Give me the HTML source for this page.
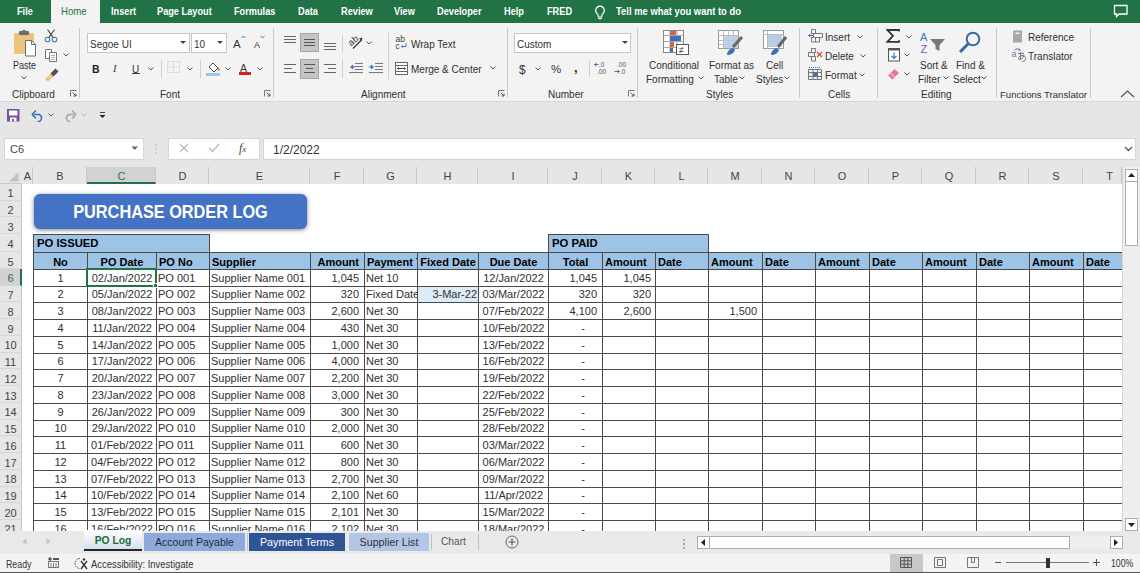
<!DOCTYPE html><html><head><meta charset="utf-8"><style>
*{margin:0;padding:0;box-sizing:border-box}
html,body{width:1140px;height:573px;overflow:hidden;background:#e6e6e6;font-family:'Liberation Sans', sans-serif;position:relative}
.a{position:absolute;white-space:nowrap}
.t{position:absolute;white-space:nowrap;line-height:1}
</style></head><body><div class="a" style="left:0;top:0;width:1140px;height:23px;background:#217346"></div>
<div class="a" style="left:51px;top:0;width:49px;height:23px;background:#f3f3f3"></div>
<div class="t" style="left:17px;top:6.5px;font-size:10px;font-weight:bold;color:#fff;transform:scaleX(0.92);transform-origin:0 0">File</div>
<div class="t" style="left:61px;top:6.5px;font-size:10.3px;color:#217346;transform:scaleX(0.93);transform-origin:0 0">Home</div>
<div class="t" style="left:111px;top:6.5px;font-size:10px;font-weight:bold;color:#fff;transform:scaleX(0.92);transform-origin:0 0">Insert</div>
<div class="t" style="left:157px;top:6.5px;font-size:10px;font-weight:bold;color:#fff;transform:scaleX(0.92);transform-origin:0 0">Page Layout</div>
<div class="t" style="left:234px;top:6.5px;font-size:10px;font-weight:bold;color:#fff;transform:scaleX(0.92);transform-origin:0 0">Formulas</div>
<div class="t" style="left:298px;top:6.5px;font-size:10px;font-weight:bold;color:#fff;transform:scaleX(0.92);transform-origin:0 0">Data</div>
<div class="t" style="left:341px;top:6.5px;font-size:10px;font-weight:bold;color:#fff;transform:scaleX(0.92);transform-origin:0 0">Review</div>
<div class="t" style="left:394px;top:6.5px;font-size:10px;font-weight:bold;color:#fff;transform:scaleX(0.92);transform-origin:0 0">View</div>
<div class="t" style="left:437px;top:6.5px;font-size:10px;font-weight:bold;color:#fff;transform:scaleX(0.92);transform-origin:0 0">Developer</div>
<div class="t" style="left:504px;top:6.5px;font-size:10px;font-weight:bold;color:#fff;transform:scaleX(0.92);transform-origin:0 0">Help</div>
<div class="t" style="left:547px;top:6.5px;font-size:10px;font-weight:bold;color:#fff;transform:scaleX(0.92);transform-origin:0 0">FRED</div>
<div class="t" style="left:616px;top:6.5px;font-size:10px;font-weight:bold;color:#fff;transform:scaleX(0.942);transform-origin:0 0">Tell me what you want to do</div>
<div class="a" style="left:0;top:23px;width:1140px;height:79px;background:#f3f3f3;border-bottom:1px solid #d6d6d6"></div>
<div class="a" style="left:4px;top:138px;width:140px;height:22px;background:#fff;border:1px solid #d4d4d4"></div>
<div class="t" style="left:10px;top:144px;font-size:11px;color:#444">C6</div>
<div class="a" style="left:168px;top:138px;width:92px;height:22px;background:#fff;border:1px solid #d4d4d4"></div>
<div class="a" style="left:263px;top:138px;width:873px;height:22px;background:#fff;border:1px solid #d4d4d4"></div>
<div class="t" style="left:273px;top:143.5px;font-size:12px;color:#333">1/2/2022</div>
<div class="a" style="left:0;top:167px;width:1123px;height:17px;background:#e6e6e6;border-bottom:1px solid #c8c8c8"></div>
<div class="a" style="left:22px;top:167px;width:11px;height:17px;background:#e6e6e6;border-right:1px solid #c8c8c8;"></div>
<div class="t" style="left:22px;top:171px;width:11px;text-align:center;font-size:11px;color:#444">A</div>
<div class="a" style="left:33px;top:167px;width:54px;height:17px;background:#e6e6e6;border-right:1px solid #c8c8c8;"></div>
<div class="t" style="left:33px;top:171px;width:54px;text-align:center;font-size:11px;color:#444">B</div>
<div class="a" style="left:87px;top:167px;width:69px;height:17px;background:#d2d2d2;border-right:1px solid #c8c8c8;border-bottom:2px solid #217346;"></div>
<div class="t" style="left:87px;top:171px;width:69px;text-align:center;font-size:11px;color:#217346">C</div>
<div class="a" style="left:156px;top:167px;width:53px;height:17px;background:#e6e6e6;border-right:1px solid #c8c8c8;"></div>
<div class="t" style="left:156px;top:171px;width:53px;text-align:center;font-size:11px;color:#444">D</div>
<div class="a" style="left:209px;top:167px;width:101px;height:17px;background:#e6e6e6;border-right:1px solid #c8c8c8;"></div>
<div class="t" style="left:209px;top:171px;width:101px;text-align:center;font-size:11px;color:#444">E</div>
<div class="a" style="left:310px;top:167px;width:54px;height:17px;background:#e6e6e6;border-right:1px solid #c8c8c8;"></div>
<div class="t" style="left:310px;top:171px;width:54px;text-align:center;font-size:11px;color:#444">F</div>
<div class="a" style="left:364px;top:167px;width:53px;height:17px;background:#e6e6e6;border-right:1px solid #c8c8c8;"></div>
<div class="t" style="left:364px;top:171px;width:53px;text-align:center;font-size:11px;color:#444">G</div>
<div class="a" style="left:417px;top:167px;width:61px;height:17px;background:#e6e6e6;border-right:1px solid #c8c8c8;"></div>
<div class="t" style="left:417px;top:171px;width:61px;text-align:center;font-size:11px;color:#444">H</div>
<div class="a" style="left:478px;top:167px;width:70px;height:17px;background:#e6e6e6;border-right:1px solid #c8c8c8;"></div>
<div class="t" style="left:478px;top:171px;width:70px;text-align:center;font-size:11px;color:#444">I</div>
<div class="a" style="left:548px;top:167px;width:54px;height:17px;background:#e6e6e6;border-right:1px solid #c8c8c8;"></div>
<div class="t" style="left:548px;top:171px;width:54px;text-align:center;font-size:11px;color:#444">J</div>
<div class="a" style="left:602px;top:167px;width:53px;height:17px;background:#e6e6e6;border-right:1px solid #c8c8c8;"></div>
<div class="t" style="left:602px;top:171px;width:53px;text-align:center;font-size:11px;color:#444">K</div>
<div class="a" style="left:655px;top:167px;width:53px;height:17px;background:#e6e6e6;border-right:1px solid #c8c8c8;"></div>
<div class="t" style="left:655px;top:171px;width:53px;text-align:center;font-size:11px;color:#444">L</div>
<div class="a" style="left:708px;top:167px;width:54px;height:17px;background:#e6e6e6;border-right:1px solid #c8c8c8;"></div>
<div class="t" style="left:708px;top:171px;width:54px;text-align:center;font-size:11px;color:#444">M</div>
<div class="a" style="left:762px;top:167px;width:53px;height:17px;background:#e6e6e6;border-right:1px solid #c8c8c8;"></div>
<div class="t" style="left:762px;top:171px;width:53px;text-align:center;font-size:11px;color:#444">N</div>
<div class="a" style="left:815px;top:167px;width:54px;height:17px;background:#e6e6e6;border-right:1px solid #c8c8c8;"></div>
<div class="t" style="left:815px;top:171px;width:54px;text-align:center;font-size:11px;color:#444">O</div>
<div class="a" style="left:869px;top:167px;width:53px;height:17px;background:#e6e6e6;border-right:1px solid #c8c8c8;"></div>
<div class="t" style="left:869px;top:171px;width:53px;text-align:center;font-size:11px;color:#444">P</div>
<div class="a" style="left:922px;top:167px;width:54px;height:17px;background:#e6e6e6;border-right:1px solid #c8c8c8;"></div>
<div class="t" style="left:922px;top:171px;width:54px;text-align:center;font-size:11px;color:#444">Q</div>
<div class="a" style="left:976px;top:167px;width:53px;height:17px;background:#e6e6e6;border-right:1px solid #c8c8c8;"></div>
<div class="t" style="left:976px;top:171px;width:53px;text-align:center;font-size:11px;color:#444">R</div>
<div class="a" style="left:1029px;top:167px;width:54px;height:17px;background:#e6e6e6;border-right:1px solid #c8c8c8;"></div>
<div class="t" style="left:1029px;top:171px;width:54px;text-align:center;font-size:11px;color:#444">S</div>
<div class="a" style="left:1083px;top:167px;width:39px;height:17px;background:#e6e6e6;border-right:1px solid #c8c8c8;"></div>
<div class="t" style="left:1083px;top:171px;width:53px;text-align:center;font-size:11px;color:#444">T</div>
<div class="a" style="left:22px;top:184px;width:1100px;height:347px;background:#fff"></div>
<div class="a" style="left:0;top:184px;width:22px;height:17px;background:#e6e6e6;border-bottom:1px solid #d6d6d6;border-right:1px solid #c8c8c8"></div>
<div class="t" style="left:0;top:188px;width:21px;text-align:center;font-size:11px;color:#444">1</div>
<div class="a" style="left:0;top:201px;width:22px;height:16px;background:#e6e6e6;border-bottom:1px solid #d6d6d6;border-right:1px solid #c8c8c8"></div>
<div class="t" style="left:0;top:205px;width:21px;text-align:center;font-size:11px;color:#444">2</div>
<div class="a" style="left:0;top:217px;width:22px;height:17px;background:#e6e6e6;border-bottom:1px solid #d6d6d6;border-right:1px solid #c8c8c8"></div>
<div class="t" style="left:0;top:222px;width:21px;text-align:center;font-size:11px;color:#444">3</div>
<div class="a" style="left:0;top:234px;width:22px;height:18px;background:#e6e6e6;border-bottom:1px solid #d6d6d6;border-right:1px solid #c8c8c8"></div>
<div class="t" style="left:0;top:239px;width:21px;text-align:center;font-size:11px;color:#444">4</div>
<div class="a" style="left:0;top:252px;width:22px;height:17px;background:#e6e6e6;border-bottom:1px solid #d6d6d6;border-right:1px solid #c8c8c8"></div>
<div class="t" style="left:0;top:257px;width:21px;text-align:center;font-size:11px;color:#444">5</div>
<div class="a" style="left:0;top:269px;width:22px;height:17px;background:#d2d2d2;border-bottom:1px solid #d6d6d6;border-right:2px solid #217346"></div>
<div class="t" style="left:0;top:273px;width:21px;text-align:center;font-size:11px;color:#217346">6</div>
<div class="a" style="left:0;top:286px;width:22px;height:16px;background:#e6e6e6;border-bottom:1px solid #d6d6d6;border-right:1px solid #c8c8c8"></div>
<div class="t" style="left:0;top:290px;width:21px;text-align:center;font-size:11px;color:#444">7</div>
<div class="a" style="left:0;top:302px;width:22px;height:17px;background:#e6e6e6;border-bottom:1px solid #d6d6d6;border-right:1px solid #c8c8c8"></div>
<div class="t" style="left:0;top:307px;width:21px;text-align:center;font-size:11px;color:#444">8</div>
<div class="a" style="left:0;top:319px;width:22px;height:17px;background:#e6e6e6;border-bottom:1px solid #d6d6d6;border-right:1px solid #c8c8c8"></div>
<div class="t" style="left:0;top:324px;width:21px;text-align:center;font-size:11px;color:#444">9</div>
<div class="a" style="left:0;top:336px;width:22px;height:17px;background:#e6e6e6;border-bottom:1px solid #d6d6d6;border-right:1px solid #c8c8c8"></div>
<div class="t" style="left:0;top:340px;width:21px;text-align:center;font-size:11px;color:#444">10</div>
<div class="a" style="left:0;top:353px;width:22px;height:16px;background:#e6e6e6;border-bottom:1px solid #d6d6d6;border-right:1px solid #c8c8c8"></div>
<div class="t" style="left:0;top:357px;width:21px;text-align:center;font-size:11px;color:#444">11</div>
<div class="a" style="left:0;top:369px;width:22px;height:17px;background:#e6e6e6;border-bottom:1px solid #d6d6d6;border-right:1px solid #c8c8c8"></div>
<div class="t" style="left:0;top:374px;width:21px;text-align:center;font-size:11px;color:#444">12</div>
<div class="a" style="left:0;top:386px;width:22px;height:17px;background:#e6e6e6;border-bottom:1px solid #d6d6d6;border-right:1px solid #c8c8c8"></div>
<div class="t" style="left:0;top:391px;width:21px;text-align:center;font-size:11px;color:#444">13</div>
<div class="a" style="left:0;top:403px;width:22px;height:17px;background:#e6e6e6;border-bottom:1px solid #d6d6d6;border-right:1px solid #c8c8c8"></div>
<div class="t" style="left:0;top:407px;width:21px;text-align:center;font-size:11px;color:#444">14</div>
<div class="a" style="left:0;top:420px;width:22px;height:16px;background:#e6e6e6;border-bottom:1px solid #d6d6d6;border-right:1px solid #c8c8c8"></div>
<div class="t" style="left:0;top:424px;width:21px;text-align:center;font-size:11px;color:#444">15</div>
<div class="a" style="left:0;top:436px;width:22px;height:17px;background:#e6e6e6;border-bottom:1px solid #d6d6d6;border-right:1px solid #c8c8c8"></div>
<div class="t" style="left:0;top:441px;width:21px;text-align:center;font-size:11px;color:#444">16</div>
<div class="a" style="left:0;top:453px;width:22px;height:17px;background:#e6e6e6;border-bottom:1px solid #d6d6d6;border-right:1px solid #c8c8c8"></div>
<div class="t" style="left:0;top:458px;width:21px;text-align:center;font-size:11px;color:#444">17</div>
<div class="a" style="left:0;top:470px;width:22px;height:17px;background:#e6e6e6;border-bottom:1px solid #d6d6d6;border-right:1px solid #c8c8c8"></div>
<div class="t" style="left:0;top:474px;width:21px;text-align:center;font-size:11px;color:#444">18</div>
<div class="a" style="left:0;top:487px;width:22px;height:16px;background:#e6e6e6;border-bottom:1px solid #d6d6d6;border-right:1px solid #c8c8c8"></div>
<div class="t" style="left:0;top:491px;width:21px;text-align:center;font-size:11px;color:#444">19</div>
<div class="a" style="left:0;top:503px;width:22px;height:17px;background:#e6e6e6;border-bottom:1px solid #d6d6d6;border-right:1px solid #c8c8c8"></div>
<div class="t" style="left:0;top:508px;width:21px;text-align:center;font-size:11px;color:#444">20</div>
<div class="a" style="left:0;top:520px;width:22px;height:17px;background:#e6e6e6;border-bottom:1px solid #d6d6d6;border-right:1px solid #c8c8c8"></div>
<div class="t" style="left:0;top:524px;width:21px;text-align:center;font-size:11px;color:#444">21</div>
<div class="a" style="left:33px;top:234px;width:176px;height:18px;background:#9dc3e6"></div>
<div class="a" style="left:548px;top:234px;width:160px;height:18px;background:#9dc3e6"></div>
<div class="a" style="left:33px;top:252px;width:1089px;height:17px;background:#9dc3e6"></div>
<div class="a" style="left:417px;top:286px;width:61px;height:16px;background:#ddebf7"></div>
<div class="a" style="left:33px;top:234px;width:177px;height:1px;background:#4a4a4a"></div>
<div class="a" style="left:548px;top:234px;width:161px;height:1px;background:#4a4a4a"></div>
<div class="a" style="left:33px;top:252px;width:1090px;height:1px;background:#4a4a4a"></div>
<div class="a" style="left:33px;top:269px;width:1090px;height:1px;background:#4a4a4a"></div>
<div class="a" style="left:33px;top:286px;width:1090px;height:1px;background:#4a4a4a"></div>
<div class="a" style="left:33px;top:302px;width:1090px;height:1px;background:#4a4a4a"></div>
<div class="a" style="left:33px;top:319px;width:1090px;height:1px;background:#4a4a4a"></div>
<div class="a" style="left:33px;top:336px;width:1090px;height:1px;background:#4a4a4a"></div>
<div class="a" style="left:33px;top:353px;width:1090px;height:1px;background:#4a4a4a"></div>
<div class="a" style="left:33px;top:369px;width:1090px;height:1px;background:#4a4a4a"></div>
<div class="a" style="left:33px;top:386px;width:1090px;height:1px;background:#4a4a4a"></div>
<div class="a" style="left:33px;top:403px;width:1090px;height:1px;background:#4a4a4a"></div>
<div class="a" style="left:33px;top:420px;width:1090px;height:1px;background:#4a4a4a"></div>
<div class="a" style="left:33px;top:436px;width:1090px;height:1px;background:#4a4a4a"></div>
<div class="a" style="left:33px;top:453px;width:1090px;height:1px;background:#4a4a4a"></div>
<div class="a" style="left:33px;top:470px;width:1090px;height:1px;background:#4a4a4a"></div>
<div class="a" style="left:33px;top:487px;width:1090px;height:1px;background:#4a4a4a"></div>
<div class="a" style="left:33px;top:503px;width:1090px;height:1px;background:#4a4a4a"></div>
<div class="a" style="left:33px;top:520px;width:1090px;height:1px;background:#4a4a4a"></div>
<div class="a" style="left:33px;top:252px;width:1px;height:280px;background:#4a4a4a"></div>
<div class="a" style="left:87px;top:252px;width:1px;height:280px;background:#4a4a4a"></div>
<div class="a" style="left:156px;top:252px;width:1px;height:280px;background:#4a4a4a"></div>
<div class="a" style="left:209px;top:252px;width:1px;height:280px;background:#4a4a4a"></div>
<div class="a" style="left:310px;top:252px;width:1px;height:280px;background:#4a4a4a"></div>
<div class="a" style="left:364px;top:252px;width:1px;height:280px;background:#4a4a4a"></div>
<div class="a" style="left:417px;top:252px;width:1px;height:280px;background:#4a4a4a"></div>
<div class="a" style="left:478px;top:252px;width:1px;height:280px;background:#4a4a4a"></div>
<div class="a" style="left:548px;top:252px;width:1px;height:280px;background:#4a4a4a"></div>
<div class="a" style="left:602px;top:252px;width:1px;height:280px;background:#4a4a4a"></div>
<div class="a" style="left:655px;top:252px;width:1px;height:280px;background:#4a4a4a"></div>
<div class="a" style="left:708px;top:252px;width:1px;height:280px;background:#4a4a4a"></div>
<div class="a" style="left:762px;top:252px;width:1px;height:280px;background:#4a4a4a"></div>
<div class="a" style="left:815px;top:252px;width:1px;height:280px;background:#4a4a4a"></div>
<div class="a" style="left:869px;top:252px;width:1px;height:280px;background:#4a4a4a"></div>
<div class="a" style="left:922px;top:252px;width:1px;height:280px;background:#4a4a4a"></div>
<div class="a" style="left:976px;top:252px;width:1px;height:280px;background:#4a4a4a"></div>
<div class="a" style="left:1029px;top:252px;width:1px;height:280px;background:#4a4a4a"></div>
<div class="a" style="left:1083px;top:252px;width:1px;height:280px;background:#4a4a4a"></div>
<div class="a" style="left:33px;top:234px;width:1px;height:298px;background:#4a4a4a"></div>
<div class="a" style="left:209px;top:234px;width:1px;height:19px;background:#4a4a4a"></div>
<div class="a" style="left:548px;top:234px;width:1px;height:19px;background:#4a4a4a"></div>
<div class="a" style="left:708px;top:234px;width:1px;height:19px;background:#4a4a4a"></div>
<div class="t" style="left:37px;top:237.6px;font-size:11.3px;font-weight:bold;color:#000">PO ISSUED</div>
<div class="t" style="left:552px;top:237.6px;font-size:11.3px;font-weight:bold;color:#000">PO PAID</div>
<div class="t" style="left:34px;top:256.5px;width:53px;font-size:11px;color:#000;font-weight:bold;text-align:center;">No</div>
<div class="t" style="left:88px;top:256.5px;width:68px;font-size:11px;color:#000;font-weight:bold;text-align:center;">PO Date</div>
<div class="t" style="left:157px;top:256.5px;width:52px;font-size:11px;color:#000;font-weight:bold;text-align:left;padding-left:2px;">PO No</div>
<div class="t" style="left:210px;top:256.5px;width:100px;font-size:11px;color:#000;font-weight:bold;text-align:left;padding-left:2px;">Supplier</div>
<div class="t" style="left:311px;top:256.5px;width:53px;font-size:11px;color:#000;font-weight:bold;text-align:right;padding-right:5px;">Amount</div>
<div class="t" style="left:365px;top:256.5px;width:52px;font-size:11px;color:#000;font-weight:bold;text-align:left;padding-left:2px;overflow:hidden;">Payment Terms</div>
<div class="t" style="left:418px;top:256.5px;width:60px;font-size:11px;color:#000;font-weight:bold;text-align:center;">Fixed Date</div>
<div class="t" style="left:479px;top:256.5px;width:69px;font-size:11px;color:#000;font-weight:bold;text-align:center;">Due Date</div>
<div class="t" style="left:549px;top:256.5px;width:53px;font-size:11px;color:#000;font-weight:bold;text-align:center;">Total</div>
<div class="t" style="left:603px;top:256.5px;width:52px;font-size:11px;color:#000;font-weight:bold;text-align:left;padding-left:2px;">Amount</div>
<div class="t" style="left:656px;top:256.5px;width:52px;font-size:11px;color:#000;font-weight:bold;text-align:left;padding-left:2px;">Date</div>
<div class="t" style="left:709px;top:256.5px;width:53px;font-size:11px;color:#000;font-weight:bold;text-align:left;padding-left:2px;">Amount</div>
<div class="t" style="left:763px;top:256.5px;width:52px;font-size:11px;color:#000;font-weight:bold;text-align:left;padding-left:2px;">Date</div>
<div class="t" style="left:816px;top:256.5px;width:53px;font-size:11px;color:#000;font-weight:bold;text-align:left;padding-left:2px;">Amount</div>
<div class="t" style="left:870px;top:256.5px;width:52px;font-size:11px;color:#000;font-weight:bold;text-align:left;padding-left:2px;">Date</div>
<div class="t" style="left:923px;top:256.5px;width:53px;font-size:11px;color:#000;font-weight:bold;text-align:left;padding-left:2px;">Amount</div>
<div class="t" style="left:977px;top:256.5px;width:52px;font-size:11px;color:#000;font-weight:bold;text-align:left;padding-left:2px;">Date</div>
<div class="t" style="left:1030px;top:256.5px;width:53px;font-size:11px;color:#000;font-weight:bold;text-align:left;padding-left:2px;">Amount</div>
<div class="t" style="left:1084px;top:256.5px;width:38px;font-size:11px;color:#000;font-weight:bold;text-align:left;padding-left:2px;">Date</div>
<div class="t" style="left:34px;top:272.6px;width:53px;font-size:11px;color:#303030;text-align:center;">1</div>
<div class="t" style="left:88px;top:272.6px;width:68px;font-size:11px;color:#303030;text-align:center;">02/Jan/2022</div>
<div class="t" style="left:157px;top:272.6px;width:52px;font-size:11px;color:#303030;text-align:left;padding-left:1px;">PO 001</div>
<div class="t" style="left:210px;top:272.6px;width:100px;font-size:11px;color:#303030;text-align:left;padding-left:1px;">Supplier Name 001</div>
<div class="t" style="left:311px;top:272.6px;width:53px;font-size:11px;color:#303030;text-align:right;padding-right:5px;">1,045</div>
<div class="t" style="left:365px;top:272.6px;width:52px;font-size:11px;color:#303030;text-align:left;padding-left:1px;overflow:hidden;">Net 10</div>
<div class="t" style="left:479px;top:272.6px;width:69px;font-size:11px;color:#303030;text-align:center;">12/Jan/2022</div>
<div class="t" style="left:549px;top:272.6px;width:53px;font-size:11px;color:#303030;text-align:right;padding-right:5px;">1,045</div>
<div class="t" style="left:603px;top:272.6px;width:52px;font-size:11px;color:#303030;text-align:right;padding-right:4px;">1,045</div>
<div class="t" style="left:34px;top:289.3px;width:53px;font-size:11px;color:#303030;text-align:center;">2</div>
<div class="t" style="left:88px;top:289.3px;width:68px;font-size:11px;color:#303030;text-align:center;">05/Jan/2022</div>
<div class="t" style="left:157px;top:289.3px;width:52px;font-size:11px;color:#303030;text-align:left;padding-left:1px;">PO 002</div>
<div class="t" style="left:210px;top:289.3px;width:100px;font-size:11px;color:#303030;text-align:left;padding-left:1px;">Supplier Name 002</div>
<div class="t" style="left:311px;top:289.3px;width:53px;font-size:11px;color:#303030;text-align:right;padding-right:5px;">320</div>
<div class="t" style="left:365px;top:289.3px;width:52px;font-size:11px;color:#303030;text-align:left;padding-left:1px;overflow:hidden;">Fixed Date</div>
<div class="t" style="left:418px;top:289.3px;width:60px;font-size:11px;color:#303030;text-align:right;padding-right:1px;">3-Mar-22</div>
<div class="t" style="left:479px;top:289.3px;width:69px;font-size:11px;color:#303030;text-align:center;">03/Mar/2022</div>
<div class="t" style="left:549px;top:289.3px;width:53px;font-size:11px;color:#303030;text-align:right;padding-right:5px;">320</div>
<div class="t" style="left:603px;top:289.3px;width:52px;font-size:11px;color:#303030;text-align:right;padding-right:4px;">320</div>
<div class="t" style="left:34px;top:306.1px;width:53px;font-size:11px;color:#303030;text-align:center;">3</div>
<div class="t" style="left:88px;top:306.1px;width:68px;font-size:11px;color:#303030;text-align:center;">08/Jan/2022</div>
<div class="t" style="left:157px;top:306.1px;width:52px;font-size:11px;color:#303030;text-align:left;padding-left:1px;">PO 003</div>
<div class="t" style="left:210px;top:306.1px;width:100px;font-size:11px;color:#303030;text-align:left;padding-left:1px;">Supplier Name 003</div>
<div class="t" style="left:311px;top:306.1px;width:53px;font-size:11px;color:#303030;text-align:right;padding-right:5px;">2,600</div>
<div class="t" style="left:365px;top:306.1px;width:52px;font-size:11px;color:#303030;text-align:left;padding-left:1px;overflow:hidden;">Net 30</div>
<div class="t" style="left:479px;top:306.1px;width:69px;font-size:11px;color:#303030;text-align:center;">07/Feb/2022</div>
<div class="t" style="left:549px;top:306.1px;width:53px;font-size:11px;color:#303030;text-align:right;padding-right:5px;">4,100</div>
<div class="t" style="left:603px;top:306.1px;width:52px;font-size:11px;color:#303030;text-align:right;padding-right:4px;">2,600</div>
<div class="t" style="left:709px;top:306.1px;width:53px;font-size:11px;color:#303030;text-align:right;padding-right:5px;">1,500</div>
<div class="t" style="left:34px;top:322.8px;width:53px;font-size:11px;color:#303030;text-align:center;">4</div>
<div class="t" style="left:88px;top:322.8px;width:68px;font-size:11px;color:#303030;text-align:center;">11/Jan/2022</div>
<div class="t" style="left:157px;top:322.8px;width:52px;font-size:11px;color:#303030;text-align:left;padding-left:1px;">PO 004</div>
<div class="t" style="left:210px;top:322.8px;width:100px;font-size:11px;color:#303030;text-align:left;padding-left:1px;">Supplier Name 004</div>
<div class="t" style="left:311px;top:322.8px;width:53px;font-size:11px;color:#303030;text-align:right;padding-right:5px;">430</div>
<div class="t" style="left:365px;top:322.8px;width:52px;font-size:11px;color:#303030;text-align:left;padding-left:1px;overflow:hidden;">Net 30</div>
<div class="t" style="left:479px;top:322.8px;width:69px;font-size:11px;color:#303030;text-align:center;">10/Feb/2022</div>
<div class="t" style="left:549px;top:322.8px;width:53px;font-size:11px;color:#303030;text-align:right;padding-right:17px;">-</div>
<div class="t" style="left:34px;top:339.6px;width:53px;font-size:11px;color:#303030;text-align:center;">5</div>
<div class="t" style="left:88px;top:339.6px;width:68px;font-size:11px;color:#303030;text-align:center;">14/Jan/2022</div>
<div class="t" style="left:157px;top:339.6px;width:52px;font-size:11px;color:#303030;text-align:left;padding-left:1px;">PO 005</div>
<div class="t" style="left:210px;top:339.6px;width:100px;font-size:11px;color:#303030;text-align:left;padding-left:1px;">Supplier Name 005</div>
<div class="t" style="left:311px;top:339.6px;width:53px;font-size:11px;color:#303030;text-align:right;padding-right:5px;">1,000</div>
<div class="t" style="left:365px;top:339.6px;width:52px;font-size:11px;color:#303030;text-align:left;padding-left:1px;overflow:hidden;">Net 30</div>
<div class="t" style="left:479px;top:339.6px;width:69px;font-size:11px;color:#303030;text-align:center;">13/Feb/2022</div>
<div class="t" style="left:549px;top:339.6px;width:53px;font-size:11px;color:#303030;text-align:right;padding-right:17px;">-</div>
<div class="t" style="left:34px;top:356.3px;width:53px;font-size:11px;color:#303030;text-align:center;">6</div>
<div class="t" style="left:88px;top:356.3px;width:68px;font-size:11px;color:#303030;text-align:center;">17/Jan/2022</div>
<div class="t" style="left:157px;top:356.3px;width:52px;font-size:11px;color:#303030;text-align:left;padding-left:1px;">PO 006</div>
<div class="t" style="left:210px;top:356.3px;width:100px;font-size:11px;color:#303030;text-align:left;padding-left:1px;">Supplier Name 006</div>
<div class="t" style="left:311px;top:356.3px;width:53px;font-size:11px;color:#303030;text-align:right;padding-right:5px;">4,000</div>
<div class="t" style="left:365px;top:356.3px;width:52px;font-size:11px;color:#303030;text-align:left;padding-left:1px;overflow:hidden;">Net 30</div>
<div class="t" style="left:479px;top:356.3px;width:69px;font-size:11px;color:#303030;text-align:center;">16/Feb/2022</div>
<div class="t" style="left:549px;top:356.3px;width:53px;font-size:11px;color:#303030;text-align:right;padding-right:17px;">-</div>
<div class="t" style="left:34px;top:373.0px;width:53px;font-size:11px;color:#303030;text-align:center;">7</div>
<div class="t" style="left:88px;top:373.0px;width:68px;font-size:11px;color:#303030;text-align:center;">20/Jan/2022</div>
<div class="t" style="left:157px;top:373.0px;width:52px;font-size:11px;color:#303030;text-align:left;padding-left:1px;">PO 007</div>
<div class="t" style="left:210px;top:373.0px;width:100px;font-size:11px;color:#303030;text-align:left;padding-left:1px;">Supplier Name 007</div>
<div class="t" style="left:311px;top:373.0px;width:53px;font-size:11px;color:#303030;text-align:right;padding-right:5px;">2,200</div>
<div class="t" style="left:365px;top:373.0px;width:52px;font-size:11px;color:#303030;text-align:left;padding-left:1px;overflow:hidden;">Net 30</div>
<div class="t" style="left:479px;top:373.0px;width:69px;font-size:11px;color:#303030;text-align:center;">19/Feb/2022</div>
<div class="t" style="left:549px;top:373.0px;width:53px;font-size:11px;color:#303030;text-align:right;padding-right:17px;">-</div>
<div class="t" style="left:34px;top:389.8px;width:53px;font-size:11px;color:#303030;text-align:center;">8</div>
<div class="t" style="left:88px;top:389.8px;width:68px;font-size:11px;color:#303030;text-align:center;">23/Jan/2022</div>
<div class="t" style="left:157px;top:389.8px;width:52px;font-size:11px;color:#303030;text-align:left;padding-left:1px;">PO 008</div>
<div class="t" style="left:210px;top:389.8px;width:100px;font-size:11px;color:#303030;text-align:left;padding-left:1px;">Supplier Name 008</div>
<div class="t" style="left:311px;top:389.8px;width:53px;font-size:11px;color:#303030;text-align:right;padding-right:5px;">3,000</div>
<div class="t" style="left:365px;top:389.8px;width:52px;font-size:11px;color:#303030;text-align:left;padding-left:1px;overflow:hidden;">Net 30</div>
<div class="t" style="left:479px;top:389.8px;width:69px;font-size:11px;color:#303030;text-align:center;">22/Feb/2022</div>
<div class="t" style="left:549px;top:389.8px;width:53px;font-size:11px;color:#303030;text-align:right;padding-right:17px;">-</div>
<div class="t" style="left:34px;top:406.5px;width:53px;font-size:11px;color:#303030;text-align:center;">9</div>
<div class="t" style="left:88px;top:406.5px;width:68px;font-size:11px;color:#303030;text-align:center;">26/Jan/2022</div>
<div class="t" style="left:157px;top:406.5px;width:52px;font-size:11px;color:#303030;text-align:left;padding-left:1px;">PO 009</div>
<div class="t" style="left:210px;top:406.5px;width:100px;font-size:11px;color:#303030;text-align:left;padding-left:1px;">Supplier Name 009</div>
<div class="t" style="left:311px;top:406.5px;width:53px;font-size:11px;color:#303030;text-align:right;padding-right:5px;">300</div>
<div class="t" style="left:365px;top:406.5px;width:52px;font-size:11px;color:#303030;text-align:left;padding-left:1px;overflow:hidden;">Net 30</div>
<div class="t" style="left:479px;top:406.5px;width:69px;font-size:11px;color:#303030;text-align:center;">25/Feb/2022</div>
<div class="t" style="left:549px;top:406.5px;width:53px;font-size:11px;color:#303030;text-align:right;padding-right:17px;">-</div>
<div class="t" style="left:34px;top:423.3px;width:53px;font-size:11px;color:#303030;text-align:center;">10</div>
<div class="t" style="left:88px;top:423.3px;width:68px;font-size:11px;color:#303030;text-align:center;">29/Jan/2022</div>
<div class="t" style="left:157px;top:423.3px;width:52px;font-size:11px;color:#303030;text-align:left;padding-left:1px;">PO 010</div>
<div class="t" style="left:210px;top:423.3px;width:100px;font-size:11px;color:#303030;text-align:left;padding-left:1px;">Supplier Name 010</div>
<div class="t" style="left:311px;top:423.3px;width:53px;font-size:11px;color:#303030;text-align:right;padding-right:5px;">2,000</div>
<div class="t" style="left:365px;top:423.3px;width:52px;font-size:11px;color:#303030;text-align:left;padding-left:1px;overflow:hidden;">Net 30</div>
<div class="t" style="left:479px;top:423.3px;width:69px;font-size:11px;color:#303030;text-align:center;">28/Feb/2022</div>
<div class="t" style="left:549px;top:423.3px;width:53px;font-size:11px;color:#303030;text-align:right;padding-right:17px;">-</div>
<div class="t" style="left:34px;top:440.0px;width:53px;font-size:11px;color:#303030;text-align:center;">11</div>
<div class="t" style="left:88px;top:440.0px;width:68px;font-size:11px;color:#303030;text-align:center;">01/Feb/2022</div>
<div class="t" style="left:157px;top:440.0px;width:52px;font-size:11px;color:#303030;text-align:left;padding-left:1px;">PO 011</div>
<div class="t" style="left:210px;top:440.0px;width:100px;font-size:11px;color:#303030;text-align:left;padding-left:1px;">Supplier Name 011</div>
<div class="t" style="left:311px;top:440.0px;width:53px;font-size:11px;color:#303030;text-align:right;padding-right:5px;">600</div>
<div class="t" style="left:365px;top:440.0px;width:52px;font-size:11px;color:#303030;text-align:left;padding-left:1px;overflow:hidden;">Net 30</div>
<div class="t" style="left:479px;top:440.0px;width:69px;font-size:11px;color:#303030;text-align:center;">03/Mar/2022</div>
<div class="t" style="left:549px;top:440.0px;width:53px;font-size:11px;color:#303030;text-align:right;padding-right:17px;">-</div>
<div class="t" style="left:34px;top:456.7px;width:53px;font-size:11px;color:#303030;text-align:center;">12</div>
<div class="t" style="left:88px;top:456.7px;width:68px;font-size:11px;color:#303030;text-align:center;">04/Feb/2022</div>
<div class="t" style="left:157px;top:456.7px;width:52px;font-size:11px;color:#303030;text-align:left;padding-left:1px;">PO 012</div>
<div class="t" style="left:210px;top:456.7px;width:100px;font-size:11px;color:#303030;text-align:left;padding-left:1px;">Supplier Name 012</div>
<div class="t" style="left:311px;top:456.7px;width:53px;font-size:11px;color:#303030;text-align:right;padding-right:5px;">800</div>
<div class="t" style="left:365px;top:456.7px;width:52px;font-size:11px;color:#303030;text-align:left;padding-left:1px;overflow:hidden;">Net 30</div>
<div class="t" style="left:479px;top:456.7px;width:69px;font-size:11px;color:#303030;text-align:center;">06/Mar/2022</div>
<div class="t" style="left:549px;top:456.7px;width:53px;font-size:11px;color:#303030;text-align:right;padding-right:17px;">-</div>
<div class="t" style="left:34px;top:473.5px;width:53px;font-size:11px;color:#303030;text-align:center;">13</div>
<div class="t" style="left:88px;top:473.5px;width:68px;font-size:11px;color:#303030;text-align:center;">07/Feb/2022</div>
<div class="t" style="left:157px;top:473.5px;width:52px;font-size:11px;color:#303030;text-align:left;padding-left:1px;">PO 013</div>
<div class="t" style="left:210px;top:473.5px;width:100px;font-size:11px;color:#303030;text-align:left;padding-left:1px;">Supplier Name 013</div>
<div class="t" style="left:311px;top:473.5px;width:53px;font-size:11px;color:#303030;text-align:right;padding-right:5px;">2,700</div>
<div class="t" style="left:365px;top:473.5px;width:52px;font-size:11px;color:#303030;text-align:left;padding-left:1px;overflow:hidden;">Net 30</div>
<div class="t" style="left:479px;top:473.5px;width:69px;font-size:11px;color:#303030;text-align:center;">09/Mar/2022</div>
<div class="t" style="left:549px;top:473.5px;width:53px;font-size:11px;color:#303030;text-align:right;padding-right:17px;">-</div>
<div class="t" style="left:34px;top:490.2px;width:53px;font-size:11px;color:#303030;text-align:center;">14</div>
<div class="t" style="left:88px;top:490.2px;width:68px;font-size:11px;color:#303030;text-align:center;">10/Feb/2022</div>
<div class="t" style="left:157px;top:490.2px;width:52px;font-size:11px;color:#303030;text-align:left;padding-left:1px;">PO 014</div>
<div class="t" style="left:210px;top:490.2px;width:100px;font-size:11px;color:#303030;text-align:left;padding-left:1px;">Supplier Name 014</div>
<div class="t" style="left:311px;top:490.2px;width:53px;font-size:11px;color:#303030;text-align:right;padding-right:5px;">2,100</div>
<div class="t" style="left:365px;top:490.2px;width:52px;font-size:11px;color:#303030;text-align:left;padding-left:1px;overflow:hidden;">Net 60</div>
<div class="t" style="left:479px;top:490.2px;width:69px;font-size:11px;color:#303030;text-align:center;">11/Apr/2022</div>
<div class="t" style="left:549px;top:490.2px;width:53px;font-size:11px;color:#303030;text-align:right;padding-right:17px;">-</div>
<div class="t" style="left:34px;top:507.0px;width:53px;font-size:11px;color:#303030;text-align:center;">15</div>
<div class="t" style="left:88px;top:507.0px;width:68px;font-size:11px;color:#303030;text-align:center;">13/Feb/2022</div>
<div class="t" style="left:157px;top:507.0px;width:52px;font-size:11px;color:#303030;text-align:left;padding-left:1px;">PO 015</div>
<div class="t" style="left:210px;top:507.0px;width:100px;font-size:11px;color:#303030;text-align:left;padding-left:1px;">Supplier Name 015</div>
<div class="t" style="left:311px;top:507.0px;width:53px;font-size:11px;color:#303030;text-align:right;padding-right:5px;">2,101</div>
<div class="t" style="left:365px;top:507.0px;width:52px;font-size:11px;color:#303030;text-align:left;padding-left:1px;overflow:hidden;">Net 30</div>
<div class="t" style="left:479px;top:507.0px;width:69px;font-size:11px;color:#303030;text-align:center;">15/Mar/2022</div>
<div class="t" style="left:549px;top:507.0px;width:53px;font-size:11px;color:#303030;text-align:right;padding-right:17px;">-</div>
<div class="t" style="left:34px;top:523.7px;width:53px;font-size:11px;color:#303030;text-align:center;">16</div>
<div class="t" style="left:88px;top:523.7px;width:68px;font-size:11px;color:#303030;text-align:center;">16/Feb/2022</div>
<div class="t" style="left:157px;top:523.7px;width:52px;font-size:11px;color:#303030;text-align:left;padding-left:1px;">PO 016</div>
<div class="t" style="left:210px;top:523.7px;width:100px;font-size:11px;color:#303030;text-align:left;padding-left:1px;">Supplier Name 016</div>
<div class="t" style="left:311px;top:523.7px;width:53px;font-size:11px;color:#303030;text-align:right;padding-right:5px;">2,102</div>
<div class="t" style="left:365px;top:523.7px;width:52px;font-size:11px;color:#303030;text-align:left;padding-left:1px;overflow:hidden;">Net 30</div>
<div class="t" style="left:479px;top:523.7px;width:69px;font-size:11px;color:#303030;text-align:center;">18/Mar/2022</div>
<div class="t" style="left:549px;top:523.7px;width:53px;font-size:11px;color:#303030;text-align:right;padding-right:17px;">-</div>
<div class="a" style="left:86px;top:268px;width:71px;height:19px;border:2px solid #217346"></div>
<div class="a" style="left:153px;top:283px;width:5px;height:5px;background:#217346;border:1px solid #fff"></div>
<svg class="a" style="left:594px;top:5px" width="12" height="15" viewBox="0 0 12 15"><path d="M6 1.2a4.3 4.3 0 0 0-2.6 7.7c.6.5.9 1.2.9 2V12h3.4v-1.1c0-.8.3-1.5.9-2A4.3 4.3 0 0 0 6 1.2z" fill="none" stroke="#fff" stroke-width="1.2"/><path d="M4.3 13.6h3.4" stroke="#fff" stroke-width="1.2"/></svg>
<svg class="a" style="left:1113px;top:4px" width="16" height="14" viewBox="0 0 16 14"><path d="M1.5 1.5h12.5v8.5H6l-2.5 2.6V10H1.5z" fill="none" stroke="#fff" stroke-width="1.3"/></svg>
<div class="a" style="left:79px;top:28px;width:1px;height:70px;background:#c8c8c8"></div>
<div class="a" style="left:273px;top:28px;width:1px;height:70px;background:#c8c8c8"></div>
<div class="a" style="left:507px;top:28px;width:1px;height:70px;background:#c8c8c8"></div>
<div class="a" style="left:637px;top:28px;width:1px;height:70px;background:#c8c8c8"></div>
<div class="a" style="left:799px;top:28px;width:1px;height:70px;background:#c8c8c8"></div>
<div class="a" style="left:877px;top:28px;width:1px;height:70px;background:#c8c8c8"></div>
<div class="a" style="left:996px;top:28px;width:1px;height:70px;background:#c8c8c8"></div>
<div class="a" style="left:1090px;top:28px;width:1px;height:70px;background:#c8c8c8"></div>
<div class="t" style="left:12px;top:89.5px;font-size:10px;color:#303030;">Clipboard</div>
<div class="t" style="left:160px;top:89.5px;font-size:10px;color:#303030;">Font</div>
<div class="t" style="left:361px;top:89.5px;font-size:10px;color:#303030;">Alignment</div>
<div class="t" style="left:548px;top:89.5px;font-size:10px;color:#303030;">Number</div>
<div class="t" style="left:706px;top:89.5px;font-size:10px;color:#303030;">Styles</div>
<div class="t" style="left:828px;top:89.5px;font-size:10px;color:#303030;">Cells</div>
<div class="t" style="left:921px;top:89.5px;font-size:10px;color:#303030;">Editing</div>
<div class="t" style="left:1000px;top:89.8px;font-size:9.6px;color:#303030;">Functions Translator</div>
<svg class="a" style="left:70px;top:90px" width="7" height="7" viewBox="0 0 7 7"><path d="M0.5 6.5V0.5H6.5" fill="none" stroke="#777" stroke-width="1"/><path d="M2.5 2.5L6 6M6 3.5V6H3.5" fill="none" stroke="#555" stroke-width="1"/></svg>
<svg class="a" style="left:264px;top:90px" width="7" height="7" viewBox="0 0 7 7"><path d="M0.5 6.5V0.5H6.5" fill="none" stroke="#777" stroke-width="1"/><path d="M2.5 2.5L6 6M6 3.5V6H3.5" fill="none" stroke="#555" stroke-width="1"/></svg>
<svg class="a" style="left:498px;top:90px" width="7" height="7" viewBox="0 0 7 7"><path d="M0.5 6.5V0.5H6.5" fill="none" stroke="#777" stroke-width="1"/><path d="M2.5 2.5L6 6M6 3.5V6H3.5" fill="none" stroke="#555" stroke-width="1"/></svg>
<svg class="a" style="left:628px;top:90px" width="7" height="7" viewBox="0 0 7 7"><path d="M0.5 6.5V0.5H6.5" fill="none" stroke="#777" stroke-width="1"/><path d="M2.5 2.5L6 6M6 3.5V6H3.5" fill="none" stroke="#555" stroke-width="1"/></svg>
<svg class="a" style="left:1120px;top:90px" width="15" height="8" viewBox="0 0 15 8"><path d="M1 7L7.5 1L14 7" fill="none" stroke="#555" stroke-width="1.2"/></svg>
<svg class="a" style="left:12px;top:29px" width="28" height="28" viewBox="0 0 28 28"><rect x="2" y="4" width="20" height="21" rx="1" fill="#eac37f"/><rect x="7" y="2" width="10" height="4" rx="1" fill="#6d6d6d"/><circle cx="12" cy="2" r="1.5" fill="#6d6d6d"/><path d="M13.5 11.5h6l4 4v11.5h-10z" fill="#fff" stroke="#6d6d6d" stroke-width="1"/><path d="M19.5 11.5v4h4" fill="none" stroke="#6d6d6d" stroke-width="1"/></svg>
<div class="t" style="left:13px;top:60.8px;font-size:10px;color:#303030;transform:scaleX(0.9);transform-origin:0 0">Paste</div>
<svg class="a" style="left:21px;top:76px" width="6" height="4" viewBox="0 0 6 4"><path d="M0.5 0.5 L3 3 L5.5 0.5" fill="none" stroke="#555" stroke-width="1"/></svg>
<svg class="a" style="left:44px;top:29px" width="14" height="14" viewBox="0 0 14 14"><circle cx="3.5" cy="10.5" r="2.3" fill="none" stroke="#4a7ab5" stroke-width="1.1"/><circle cx="10.5" cy="10.5" r="2.3" fill="none" stroke="#4a7ab5" stroke-width="1.1"/><path d="M4.8 8.6L10.5 0.5M9.2 8.6L3.5 0.5" stroke="#444" stroke-width="1.1"/></svg>
<svg class="a" style="left:44px;top:48px" width="14" height="14" viewBox="0 0 14 14"><path d="M1.5 1.5h6v9h-6z" fill="#fff" stroke="#777" stroke-width="1"/><path d="M5.5 4.5h7v9h-7z" fill="#fff" stroke="#777" stroke-width="1"/><path d="M7 7.5h4M7 9.5h4M7 11.5h4" stroke="#999" stroke-width="0.8"/></svg>
<svg class="a" style="left:63px;top:53px" width="6" height="4" viewBox="0 0 6 4"><path d="M0.5 0.5 L3 3 L5.5 0.5" fill="none" stroke="#555" stroke-width="1"/></svg>
<svg class="a" style="left:44px;top:67px" width="15" height="14" viewBox="0 0 15 14"><path d="M1 12.5l5.5-6 3 3-5.5 5z" fill="#e8c27a"/><path d="M6.5 6.5l5-5 3 3-5 5z" fill="#505050"/><path d="M4.5 8.5l3 3" stroke="#f3f3f3" stroke-width="0.8"/></svg>
<div class="a" style="left:87px;top:33px;width:103px;height:20px;background:#fff;border:1px solid #c6c6c6"></div>
<div class="t" style="left:90px;top:39.5px;font-size:10px;color:#333;">Segoe UI</div>
<svg class="a" style="left:180px;top:41px" width="6" height="4" viewBox="0 0 6 4"><path d="M0 0h6L3 3z" fill="#444"/></svg>
<div class="a" style="left:191px;top:33px;width:36px;height:20px;background:#fff;border:1px solid #c6c6c6"></div>
<div class="t" style="left:194px;top:39.5px;font-size:10px;color:#333;">10</div>
<svg class="a" style="left:217px;top:41px" width="6" height="4" viewBox="0 0 6 4"><path d="M0 0h6L3 3z" fill="#444"/></svg>
<div class="t" style="left:233px;top:39.3px;font-size:11.5px;color:#333;">A</div>
<svg class="a" style="left:241px;top:35px" width="5" height="4" viewBox="0 0 5 4"><path d="M0.5 3L2.5 1L4.5 3" fill="none" stroke="#3c73b8" stroke-width="1"/></svg>
<div class="t" style="left:254px;top:41.3px;font-size:9px;color:#333;">A</div>
<svg class="a" style="left:260px;top:35px" width="5" height="4" viewBox="0 0 5 4"><path d="M0.5 1L2.5 3L4.5 1" fill="none" stroke="#3c73b8" stroke-width="1"/></svg>
<div class="t" style="left:92px;top:64.1px;font-size:10.5px;color:#222;font-weight:bold">B</div>
<div class="t" style="left:113px;top:64.1px;font-size:10.5px;color:#333;font-style:italic;font-family:Liberation Serif">I</div>
<div class="t" style="left:132px;top:64.5px;font-size:10px;color:#333;">U</div>
<div class="a" style="left:132px;top:73px;width:8px;height:1px;background:#444"></div>
<svg class="a" style="left:148px;top:67px" width="6" height="4" viewBox="0 0 6 4"><path d="M0.5 0.5 L3 3 L5.5 0.5" fill="none" stroke="#555" stroke-width="1"/></svg>
<div class="a" style="left:161px;top:60px;width:1px;height:18px;background:#d0d0d0"></div>
<svg class="a" style="left:167px;top:61px" width="14" height="13" viewBox="0 0 14 13"><rect x="0.5" y="0.5" width="12" height="11" fill="none" stroke="#c8c8c8" stroke-dasharray="1 1"/><path d="M6.5 0.5v11M0.5 6h12" stroke="#c8c8c8" stroke-dasharray="1 1"/></svg>
<svg class="a" style="left:187px;top:67px" width="6" height="4" viewBox="0 0 6 4"><path d="M0.5 0.5 L3 3 L5.5 0.5" fill="none" stroke="#555" stroke-width="1"/></svg>
<div class="a" style="left:200px;top:60px;width:1px;height:18px;background:#d0d0d0"></div>
<svg class="a" style="left:206px;top:61px" width="15" height="16" viewBox="0 0 15 16"><path d="M3 6l4-4 5 5-4 4z" fill="#fff" stroke="#444" stroke-width="1"/><path d="M12 7c1 1.5 1.5 2.5 0.6 3" fill="none" stroke="#444" stroke-width="1"/><rect x="0" y="12" width="14" height="3" fill="#9dc3e6"/></svg>
<svg class="a" style="left:225px;top:67px" width="6" height="4" viewBox="0 0 6 4"><path d="M0.5 0.5 L3 3 L5.5 0.5" fill="none" stroke="#555" stroke-width="1"/></svg>
<div class="t" style="left:240px;top:63.1px;font-size:10.5px;color:#333;">A</div>
<div class="a" style="left:239px;top:72px;width:12px;height:3px;background:#e02020"></div>
<svg class="a" style="left:257px;top:67px" width="6" height="4" viewBox="0 0 6 4"><path d="M0.5 0.5 L3 3 L5.5 0.5" fill="none" stroke="#555" stroke-width="1"/></svg>
<svg class="a" style="left:284px;top:36px" width="12" height="7" viewBox="0 0 12 7"><path d="M0 0.5h12M0 3.5h12M0 6.5h12" stroke="#666" stroke-width="1"/></svg>
<div class="a" style="left:300px;top:33px;width:19px;height:19px;background:#c5c5c5;border:1px solid #a6a6a6"></div>
<svg class="a" style="left:304px;top:39px" width="12" height="7" viewBox="0 0 12 7"><path d="M0 0.5h11M0 3.5h11M0 6.5h11" stroke="#555" stroke-width="1"/></svg>
<svg class="a" style="left:324px;top:43px" width="12" height="7" viewBox="0 0 12 7"><path d="M0 0.5h12M0 3.5h12M0 6.5h12" stroke="#666" stroke-width="1"/></svg>
<div class="a" style="left:342px;top:35px;width:1px;height:17px;background:#d0d0d0"></div>
<svg class="a" style="left:347px;top:34px" width="17" height="16" viewBox="0 0 17 16"><text x="1" y="10" font-size="9.5" font-family="Liberation Sans" fill="#333" transform="rotate(-40 6 7)">ab</text><path d="M6 14.5L14.5 6" stroke="#333" stroke-width="1.3"/><path d="M15.5 3.5l-3.5 1 2.5 2.5z" fill="#333"/></svg>
<svg class="a" style="left:366px;top:41px" width="6" height="4" viewBox="0 0 6 4"><path d="M0.5 0.5 L3 3 L5.5 0.5" fill="none" stroke="#555" stroke-width="1"/></svg>
<div class="a" style="left:388px;top:33px;width:1px;height:46px;background:#d0d0d0"></div>
<svg class="a" style="left:395px;top:35px" width="14" height="15" viewBox="0 0 14 15"><text x="0.5" y="7" font-size="8.5" font-family="Liberation Sans" fill="#444">ab</text><text x="0.5" y="14" font-size="8.5" font-family="Liberation Sans" fill="#444">c</text><path d="M6.5 11.5h4.5v-3" fill="none" stroke="#3c73b8" stroke-width="1"/><path d="M6 11.5l2-1.5v3z" fill="#3c73b8"/></svg>
<div class="t" style="left:411px;top:39.5px;font-size:10px;color:#303030;">Wrap Text</div>
<svg class="a" style="left:284px;top:64px" width="12" height="9" viewBox="0 0 12 9"><path d="M0 0.5h12M0 4.5h8M0 8.5h12" stroke="#666" stroke-width="1"/></svg>
<div class="a" style="left:300px;top:59px;width:19px;height:20px;background:#c5c5c5;border:1px solid #a6a6a6"></div>
<svg class="a" style="left:304px;top:64px" width="12" height="9" viewBox="0 0 12 9"><path d="M0 0.5h11M2 4.5h7M0 8.5h11" stroke="#555" stroke-width="1"/></svg>
<svg class="a" style="left:324px;top:64px" width="12" height="9" viewBox="0 0 12 9"><path d="M0 0.5h12M4 4.5h8M0 8.5h12" stroke="#666" stroke-width="1"/></svg>
<div class="a" style="left:342px;top:59px;width:1px;height:19px;background:#d0d0d0"></div>
<svg class="a" style="left:349px;top:62px" width="14" height="12" viewBox="0 0 14 12"><path d="M6 1.5h8M6 4.5h8M6 7.5h8M0 10.5h14" stroke="#777" stroke-width="1"/><path d="M1 5l3-2.5v5z" fill="#3c73b8"/><path d="M3 5h3" stroke="#3c73b8" stroke-width="1.2"/></svg>
<svg class="a" style="left:369px;top:62px" width="14" height="12" viewBox="0 0 14 12"><path d="M6 1.5h8M6 4.5h8M6 7.5h8M0 10.5h14" stroke="#777" stroke-width="1"/><path d="M5 5l-3-2.5v5z" fill="#3c73b8"/><path d="M0 5h3" stroke="#3c73b8" stroke-width="1.2"/></svg>
<svg class="a" style="left:395px;top:62px" width="13" height="13" viewBox="0 0 13 13"><rect x="0.5" y="0.5" width="12" height="12" fill="#fff" stroke="#666" stroke-width="1"/><path d="M0.5 3.5h12M0.5 9.5h12" stroke="#666" stroke-width="1"/><path d="M2.5 6.5h8" stroke="#444" stroke-width="1"/><path d="M2 6.5l2-1.5v3zM11 6.5l-2-1.5v3z" fill="#444"/></svg>
<div class="t" style="left:411px;top:64.5px;font-size:10px;color:#303030;">Merge &amp; Center</div>
<svg class="a" style="left:490px;top:66px" width="6" height="4" viewBox="0 0 6 4"><path d="M0.5 0.5 L3 3 L5.5 0.5" fill="none" stroke="#555" stroke-width="1"/></svg>
<div class="a" style="left:514px;top:33px;width:117px;height:20px;background:#fff;border:1px solid #c6c6c6"></div>
<div class="t" style="left:517px;top:39.5px;font-size:10px;color:#333;">Custom</div>
<svg class="a" style="left:622px;top:41px" width="6" height="4" viewBox="0 0 6 4"><path d="M0 0h6L3 3z" fill="#444"/></svg>
<div class="t" style="left:519px;top:63.8px;font-size:12px;color:#333;">$</div>
<svg class="a" style="left:535px;top:67px" width="6" height="4" viewBox="0 0 6 4"><path d="M0.5 0.5 L3 3 L5.5 0.5" fill="none" stroke="#555" stroke-width="1"/></svg>
<div class="t" style="left:551px;top:64.3px;font-size:11.5px;color:#333;">%</div>
<div class="t" style="left:574px;top:61.0px;font-size:13px;color:#333;font-weight:bold">,</div>
<div class="a" style="left:589px;top:60px;width:1px;height:17px;background:#d0d0d0"></div>
<svg class="a" style="left:594px;top:61px" width="14" height="14" viewBox="0 0 14 14"><text x="5" y="6" font-size="6.5" font-family="Liberation Sans" fill="#555">.0</text><text x="3" y="13" font-size="6.5" font-family="Liberation Sans" fill="#555">.00</text><path d="M0.5 3.5h4M0.5 3.5l2-1.5M0.5 3.5l2 1.5" fill="none" stroke="#3c73b8" stroke-width="1"/></svg>
<svg class="a" style="left:614px;top:61px" width="14" height="14" viewBox="0 0 14 14"><text x="3" y="6" font-size="6.5" font-family="Liberation Sans" fill="#555">.00</text><text x="6" y="13" font-size="6.5" font-family="Liberation Sans" fill="#555">.0</text><path d="M0.5 10.5h5M5.5 10.5l-2-1.5M5.5 10.5l-2 1.5" fill="none" stroke="#3c73b8" stroke-width="1"/></svg>
<svg class="a" style="left:663px;top:30px" width="27" height="26" viewBox="0 0 27 26"><rect x="0.5" y="0.5" width="20" height="22" fill="#fff" stroke="#888"/><path d="M0.5 5.5h20M0.5 11.5h20M0.5 17.5h20M7 0.5v22M14 0.5v22" stroke="#aaa" stroke-width="1"/><rect x="7" y="1" width="6" height="4" fill="#d0643a"/><rect x="7" y="6" width="11" height="5" fill="#3c73b8"/><rect x="7" y="12" width="4" height="5" fill="#d0643a"/><rect x="7" y="18" width="3" height="4" fill="#3c73b8"/><rect x="13.5" y="14.5" width="12" height="10" fill="#fff" stroke="#555"/><text x="16" y="23" font-size="9" font-family="Liberation Sans" fill="#333">≠</text></svg>
<div class="t" style="left:649px;top:60.5px;font-size:10px;color:#303030;">Conditional</div>
<div class="t" style="left:646px;top:74.5px;font-size:10px;color:#303030;">Formatting</div>
<svg class="a" style="left:698px;top:76px" width="6" height="4" viewBox="0 0 6 4"><path d="M0.5 0.5 L3 3 L5.5 0.5" fill="none" stroke="#555" stroke-width="1"/></svg>
<svg class="a" style="left:718px;top:30px" width="26" height="26" viewBox="0 0 26 26"><rect x="0.5" y="0.5" width="20" height="18" fill="#fff" stroke="#999"/><path d="M0.5 5.5h20M0.5 10.5h20M0.5 14.5h20M5.5 0.5v18M10.5 0.5v18M15.5 0.5v18" stroke="#bbb"/><rect x="6" y="6" width="14" height="12" fill="#b9cce4" opacity="0.9"/><path d="M24 7l-9 10" stroke="#666" stroke-width="3"/><path d="M9 25c0-3 2-6 6-7l2 2c-1 3-4 5-8 5z" fill="#3c73b8"/></svg>
<div class="t" style="left:709px;top:60.5px;font-size:10px;color:#303030;">Format as</div>
<div class="t" style="left:714px;top:74.5px;font-size:10px;color:#303030;">Table</div>
<svg class="a" style="left:739px;top:76px" width="6" height="4" viewBox="0 0 6 4"><path d="M0.5 0.5 L3 3 L5.5 0.5" fill="none" stroke="#555" stroke-width="1"/></svg>
<svg class="a" style="left:763px;top:30px" width="24" height="26" viewBox="0 0 24 26"><rect x="0.5" y="0.5" width="20" height="18" fill="#fff" stroke="#999"/><path d="M0.5 4.5h20M4.5 0.5v18" stroke="#bbb"/><rect x="5" y="5" width="14" height="12" fill="#b9cce4"/><path d="M23 7l-8 10" stroke="#666" stroke-width="3"/><path d="M8 25c0-3 2-6 6-7l2 2c-1 3-4 5-8 5z" fill="#3c73b8"/></svg>
<div class="t" style="left:766px;top:60.5px;font-size:10px;color:#303030;">Cell</div>
<div class="t" style="left:756px;top:74.5px;font-size:10px;color:#303030;">Styles</div>
<svg class="a" style="left:784px;top:76px" width="6" height="4" viewBox="0 0 6 4"><path d="M0.5 0.5 L3 3 L5.5 0.5" fill="none" stroke="#555" stroke-width="1"/></svg>
<svg class="a" style="left:808px;top:29px" width="15" height="14" viewBox="0 0 15 14"><path d="M3.5 0.5h4v4h-4zM3.5 8.5h4v4.5h-4zM7.5 8.5h4v4.5h-4z" fill="none" stroke="#777"/><path d="M5.5 4.5h9v4h-9z" fill="none" stroke="#777"/><path d="M0.5 6.5h5M0.5 6.5l2-1.5M0.5 6.5l2 1.5" fill="none" stroke="#3c73b8"/></svg>
<div class="t" style="left:825px;top:32.5px;font-size:10px;color:#303030;">Insert</div>
<svg class="a" style="left:857px;top:35px" width="6" height="4" viewBox="0 0 6 4"><path d="M0.5 0.5 L3 3 L5.5 0.5" fill="none" stroke="#555" stroke-width="1"/></svg>
<svg class="a" style="left:808px;top:48px" width="15" height="14" viewBox="0 0 15 14"><path d="M3.5 0.5h4v4h-4zM3.5 8.5h4v4.5h-4zM0.5 4.5h6v4h-6z" fill="none" stroke="#777"/><path d="M9 4l5 5M14 4l-5 5" stroke="#d9463b" stroke-width="1.2"/></svg>
<div class="t" style="left:825px;top:51.5px;font-size:10px;color:#303030;">Delete</div>
<svg class="a" style="left:860px;top:54px" width="6" height="4" viewBox="0 0 6 4"><path d="M0.5 0.5 L3 3 L5.5 0.5" fill="none" stroke="#555" stroke-width="1"/></svg>
<svg class="a" style="left:808px;top:67px" width="15" height="14" viewBox="0 0 15 14"><path d="M0.5 2.5h13v10h-13zM0.5 5.5h13M0.5 9.5h13M5 2.5v10M9.5 2.5v10" fill="none" stroke="#777"/><rect x="5" y="5.5" width="4.5" height="4" fill="#3c73b8"/><path d="M1 0.5h12" stroke="#3c73b8" stroke-dasharray="1 1"/></svg>
<div class="t" style="left:825px;top:70.5px;font-size:10px;color:#303030;">Format</div>
<svg class="a" style="left:859px;top:73px" width="6" height="4" viewBox="0 0 6 4"><path d="M0.5 0.5 L3 3 L5.5 0.5" fill="none" stroke="#555" stroke-width="1"/></svg>
<svg class="a" style="left:886px;top:29px" width="15" height="14" viewBox="0 0 15 14"><path d="M13 2.5V1H1.5l5.5 5.8L1.5 12.8H13v-1.5" fill="none" stroke="#333" stroke-width="1.8"/></svg>
<svg class="a" style="left:906px;top:35px" width="6" height="4" viewBox="0 0 6 4"><path d="M0.5 0.5 L3 3 L5.5 0.5" fill="none" stroke="#555" stroke-width="1"/></svg>
<svg class="a" style="left:888px;top:48px" width="13" height="14" viewBox="0 0 13 14"><rect x="0.5" y="0.5" width="11" height="12.5" fill="#fff" stroke="#555"/><rect x="0.5" y="0.5" width="11" height="2" fill="#555"/><path d="M6 4.5v6M3.5 8l2.5 2.5L8.5 8" fill="none" stroke="#3c73b8" stroke-width="1.2"/></svg>
<svg class="a" style="left:904px;top:53px" width="6" height="4" viewBox="0 0 6 4"><path d="M0.5 0.5 L3 3 L5.5 0.5" fill="none" stroke="#555" stroke-width="1"/></svg>
<svg class="a" style="left:887px;top:68px" width="14" height="12" viewBox="0 0 14 12"><path d="M1 7.5l6.5-6.5 4.5 4-6.5 6.5z" fill="#e07a90"/><path d="M3.5 5l4.5 4" stroke="#f3f3f3" stroke-width="0.8"/></svg>
<svg class="a" style="left:904px;top:72px" width="6" height="4" viewBox="0 0 6 4"><path d="M0.5 0.5 L3 3 L5.5 0.5" fill="none" stroke="#555" stroke-width="1"/></svg>
<svg class="a" style="left:920px;top:31px" width="27" height="23" viewBox="0 0 27 23"><text x="0" y="10" font-size="11" font-family="Liberation Sans" fill="#3c73b8">A</text><text x="0.5" y="22" font-size="11" font-family="Liberation Sans" fill="#8c4fb2">Z</text><path d="M10 8h15l-5.5 6v6l-4-2v-4z" fill="#777"/></svg>
<div class="t" style="left:920px;top:60.5px;font-size:10px;color:#303030;">Sort &amp;</div>
<div class="t" style="left:918px;top:74.5px;font-size:10px;color:#303030;">Filter</div>
<svg class="a" style="left:943px;top:76px" width="6" height="4" viewBox="0 0 6 4"><path d="M0.5 0.5 L3 3 L5.5 0.5" fill="none" stroke="#555" stroke-width="1"/></svg>
<svg class="a" style="left:958px;top:31px" width="24" height="22" viewBox="0 0 24 22"><circle cx="15" cy="8" r="6.3" fill="none" stroke="#3a6aa3" stroke-width="2"/><path d="M10.5 12.5L2 21" stroke="#3a6aa3" stroke-width="3"/></svg>
<div class="t" style="left:956px;top:60.5px;font-size:10px;color:#303030;">Find &amp;</div>
<div class="t" style="left:953px;top:74.5px;font-size:10px;color:#303030;">Select</div>
<svg class="a" style="left:981px;top:76px" width="6" height="4" viewBox="0 0 6 4"><path d="M0.5 0.5 L3 3 L5.5 0.5" fill="none" stroke="#555" stroke-width="1"/></svg>
<div class="t" style="left:1028px;top:32.5px;font-size:10px;color:#303030;">Reference</div>
<svg class="a" style="left:1011px;top:47px" width="16" height="16" viewBox="0 0 16 16"><text x="0.5" y="9.5" font-size="9" font-family="Liberation Sans" fill="#777">a</text><path d="M7 6.5h6M9.5 5v7.5M12.5 8.5c-3 0-5 1.5-5 3s2 1.5 3 .5c1-1 2.5-3 2.5-4M10.5 8.5c2.5 0 4 1 4 3s-1.5 3-3.5 3" fill="none" stroke="#777" stroke-width="1"/><path d="M3.5 3.5a3.5 3.5 0 0 1 6 0" fill="none" stroke="#3c73b8" stroke-width="1"/><path d="M8.5 1.5l1 2-2 .5z" fill="#3c73b8"/></svg>
<svg class="a" style="left:1012px;top:30px" width="11" height="13" viewBox="0 0 11 13"><rect x="1" y="0.5" width="9" height="12" fill="#a8a8a8"/><rect x="3.5" y="2.5" width="4" height="1.5" fill="#f3f3f3"/></svg>
<div class="t" style="left:1028px;top:51.5px;font-size:10px;color:#303030;">Translator</div>
<svg class="a" style="left:7px;top:109px" width="13" height="13" viewBox="0 0 13 13"><rect x="0" y="0" width="12.5" height="12.5" fill="#7c4f9f"/><rect x="2" y="1.5" width="8.5" height="5" fill="#fff"/><rect x="3" y="8.5" width="6.5" height="4" fill="#fff"/><rect x="5" y="10" width="2" height="2.5" fill="#7c4f9f"/></svg>
<svg class="a" style="left:31px;top:109px" width="14" height="13" viewBox="0 0 14 13"><path d="M2.5 5.5h6a4 4 0 0 1 0 7h-2" fill="none" stroke="#3c73b8" stroke-width="1.6"/><path d="M1 5.5l4-4M1 5.5l4 4" fill="none" stroke="#3c73b8" stroke-width="1.6"/></svg>
<svg class="a" style="left:48px;top:113px" width="6" height="4" viewBox="0 0 6 4"><path d="M0.5 0.5 L3 3 L5.5 0.5" fill="none" stroke="#666" stroke-width="1"/></svg>
<svg class="a" style="left:64px;top:109px" width="13" height="13" viewBox="0 0 13 13"><path d="M10.5 5.5h-6a4 4 0 0 0 0 7h2" fill="none" stroke="#a6a6a6" stroke-width="1.6"/><path d="M12 5.5l-4-4M12 5.5l-4 4" fill="none" stroke="#a6a6a6" stroke-width="1.6"/></svg>
<svg class="a" style="left:81px;top:113px" width="6" height="4" viewBox="0 0 6 4"><path d="M0.5 0.5 L3 3 L5.5 0.5" fill="none" stroke="#b0b0b0" stroke-width="1"/></svg>
<svg class="a" style="left:99px;top:112px" width="7" height="8" viewBox="0 0 7 8"><path d="M1 0.5h5" stroke="#444"/><path d="M0.5 3h6L3.5 6z" fill="#222"/></svg>
<div class="a" style="left:155px;top:144px;width:2px;height:2px;background:#c4c4c4;border-radius:1px"></div>
<div class="a" style="left:155px;top:148px;width:2px;height:2px;background:#c4c4c4;border-radius:1px"></div>
<div class="a" style="left:155px;top:152px;width:2px;height:2px;background:#c4c4c4;border-radius:1px"></div>
<svg class="a" style="left:131px;top:146px" width="8" height="5" viewBox="0 0 8 5"><path d="M0.5 0.5h6.5L3.75 4z" fill="#666"/></svg>
<svg class="a" style="left:179px;top:143px" width="10" height="10" viewBox="0 0 10 10"><path d="M1 1l8 8M9 1l-8 8" stroke="#b8b8b8" stroke-width="1.2"/></svg>
<svg class="a" style="left:208px;top:143px" width="12" height="10" viewBox="0 0 12 10"><path d="M1 5l3.5 3.5L11 1" fill="none" stroke="#b8b8b8" stroke-width="1.4"/></svg>
<div class="t" style="left:239px;top:142px;font-size:12px;font-style:italic;font-family:'Liberation Serif';color:#444">f<span style="font-size:9px">x</span></div>
<svg class="a" style="left:1124px;top:146px" width="9" height="6" viewBox="0 0 9 6"><path d="M1 1l3.5 3.5L8 1" fill="none" stroke="#555" stroke-width="1.3"/></svg>
<div class="a" style="left:34px;top:194px;width:273px;height:35px;background:#4472c4;border-radius:6px;box-shadow:0 1px 4px rgba(0,0,0,0.5)"></div>
<div class="t" style="left:34px;top:201.5px;width:273px;text-align:center;font-size:19px;font-weight:bold;color:#fff;transform:scaleX(0.857);transform-origin:136.5px 0">PURCHASE ORDER LOG</div>
<div class="a" style="left:1122px;top:167px;width:18px;height:364px;background:#eeeeee;border-left:1px solid #d4d4d4"></div>
<div class="a" style="left:1125px;top:169px;width:13px;height:13px;background:#fff;border:1px solid #adadad"></div>
<svg class="a" style="left:1128px;top:173px" width="7" height="4" viewBox="0 0 7 4"><path d="M0 4L3.5 0L7 4z" fill="#222"/></svg>
<div class="a" style="left:1125px;top:181px;width:13px;height:65px;background:#fff;border:1px solid #adadad"></div>
<div class="a" style="left:1125px;top:518px;width:13px;height:13px;background:#fff;border:1px solid #adadad"></div>
<svg class="a" style="left:1128px;top:523px" width="7" height="4" viewBox="0 0 7 4"><path d="M0 0L3.5 4L7 0z" fill="#222"/></svg>
<div class="a" style="left:0;top:531px;width:1140px;height:23px;background:#e9e9e9"></div>
<svg class="a" style="left:22px;top:538px" width="5" height="7" viewBox="0 0 5 7"><path d="M4.5 0L0.5 3.5L4.5 7z" fill="#c4c4c4"/></svg>
<svg class="a" style="left:46px;top:538px" width="5" height="7" viewBox="0 0 5 7"><path d="M0.5 0L4.5 3.5L0.5 7z" fill="#c4c4c4"/></svg>
<div class="a" style="left:84px;top:530px;width:58px;height:21px;background:linear-gradient(#ffffff,#d5e1ef);border-bottom:2px solid #262626"></div>
<div class="t" style="left:84px;top:536px;width:58px;text-align:center;font-size:10.3px;font-weight:bold;color:#1d6b3b">PO Log</div>
<div class="a" style="left:144px;top:533px;width:101px;height:18px;background:#8eaadb"></div>
<div class="t" style="left:144px;top:536.5px;width:101px;text-align:center;font-size:10.5px;color:#1f2a3a">Account Payable</div>
<div class="a" style="left:247px;top:533px;width:1px;height:18px;background:#c0c0c0"></div>
<div class="a" style="left:249px;top:533px;width:96px;height:18px;background:#2f5496"></div>
<div class="t" style="left:249px;top:536.5px;width:96px;text-align:center;font-size:10.7px;color:#fff">Payment Terms</div>
<div class="a" style="left:349px;top:533px;width:80px;height:18px;background:#b4c6e7"></div>
<div class="t" style="left:349px;top:536.5px;width:80px;text-align:center;font-size:10.7px;color:#2a3442">Supplier List</div>
<div class="a" style="left:431px;top:534px;width:1px;height:16px;background:#c0c0c0"></div>
<div class="t" style="left:441px;top:536.5px;font-size:10.2px;color:#555">Chart</div>
<div class="a" style="left:478px;top:534px;width:1px;height:16px;background:#c0c0c0"></div>
<svg class="a" style="left:505px;top:535px" width="14" height="14" viewBox="0 0 14 14"><circle cx="7" cy="7" r="6" fill="none" stroke="#666" stroke-width="1"/><path d="M7 3.5v7M3.5 7h7" stroke="#555" stroke-width="1.2"/></svg>
<div class="a" style="left:683px;top:539px;width:2px;height:2px;background:#aaa"></div>
<div class="a" style="left:683px;top:543px;width:2px;height:2px;background:#aaa"></div>
<div class="a" style="left:683px;top:547px;width:2px;height:2px;background:#aaa"></div>
<div class="a" style="left:697px;top:536px;width:425px;height:13px;background:#efefef"></div>
<div class="a" style="left:697px;top:536px;width:13px;height:13px;background:#fff;border:1px solid #adadad"></div>
<svg class="a" style="left:701px;top:539px" width="4" height="7" viewBox="0 0 4 7"><path d="M4 0L0 3.5L4 7z" fill="#222"/></svg>
<div class="a" style="left:709px;top:536px;width:361px;height:13px;background:#fff;border:1px solid #adadad"></div>
<div class="a" style="left:1110px;top:536px;width:13px;height:13px;background:#fff;border:1px solid #adadad"></div>
<svg class="a" style="left:1114px;top:539px" width="4" height="7" viewBox="0 0 4 7"><path d="M0 0L4 3.5L0 7z" fill="#222"/></svg>
<div class="a" style="left:0;top:554px;width:1140px;height:19px;background:#f3f3f3;border-bottom:1px solid #555"></div>
<div class="t" style="left:6px;top:559.8px;font-size:10px;color:#333;transform:scaleX(0.88);transform-origin:0 0">Ready</div>
<svg class="a" style="left:48px;top:557px" width="12" height="11" viewBox="0 0 12 11"><circle cx="2" cy="2" r="1.7" fill="#555"/><rect x="5" y="1" width="6" height="2" fill="#555"/><rect x="0.5" y="4.5" width="10" height="6" fill="none" stroke="#777"/><path d="M3 6v4M5.5 6v4M8 6v4" stroke="#888"/></svg>
<svg class="a" style="left:74px;top:557px" width="15" height="13" viewBox="0 0 15 13"><path d="M6 1.5a5 5 0 1 0 0 10" fill="none" stroke="#444" stroke-dasharray="1.5 1"/><path d="M7 4l6 8M13 4l-6 8" stroke="#333" stroke-width="1.3"/><circle cx="10" cy="2.5" r="1.2" fill="#333"/></svg>
<div class="t" style="left:90.5px;top:559.8px;font-size:10px;color:#333;transform:scaleX(0.945);transform-origin:0 0">Accessibility: Investigate</div>
<div class="a" style="left:890px;top:554px;width:33px;height:18px;background:#c8c8c8"></div>
<svg class="a" style="left:900px;top:557px" width="12" height="11" viewBox="0 0 12 11"><path d="M0.5 0.5h11v10h-11zM0.5 3.8h11M0.5 7.2h11M4.2 0.5v10M7.8 0.5v10" fill="none" stroke="#555"/></svg>
<svg class="a" style="left:934px;top:557px" width="12" height="11" viewBox="0 0 12 11"><path d="M0.5 0.5h11v10h-11z" fill="none" stroke="#777"/><path d="M3.5 2.5h5v6h-5z" fill="none" stroke="#777"/></svg>
<svg class="a" style="left:967px;top:557px" width="12" height="11" viewBox="0 0 12 11"><path d="M0.5 0.5h11v10h-11z" fill="none" stroke="#777"/><path d="M4.5 0.5v5h3v-5" fill="none" stroke="#777"/></svg>
<div class="a" style="left:995px;top:562px;width:6px;height:1px;background:#555"></div>
<div class="a" style="left:1006px;top:562px;width:83px;height:1px;background:#777"></div>
<div class="a" style="left:1046px;top:558px;width:4px;height:10px;background:#333"></div>
<div class="a" style="left:1093px;top:562px;width:7px;height:1px;background:#555"></div>
<div class="a" style="left:1096px;top:559px;width:1px;height:7px;background:#555"></div>
<div class="t" style="left:1111px;top:559.3px;font-size:10px;color:#333;transform:scaleX(0.87);transform-origin:0 0">100%</div>
<svg class="a" style="left:9px;top:172px" width="10" height="10" viewBox="0 0 10 10"><path d="M9.5 0V9.5H0z" fill="#c2c2c2"/></svg></body></html>
